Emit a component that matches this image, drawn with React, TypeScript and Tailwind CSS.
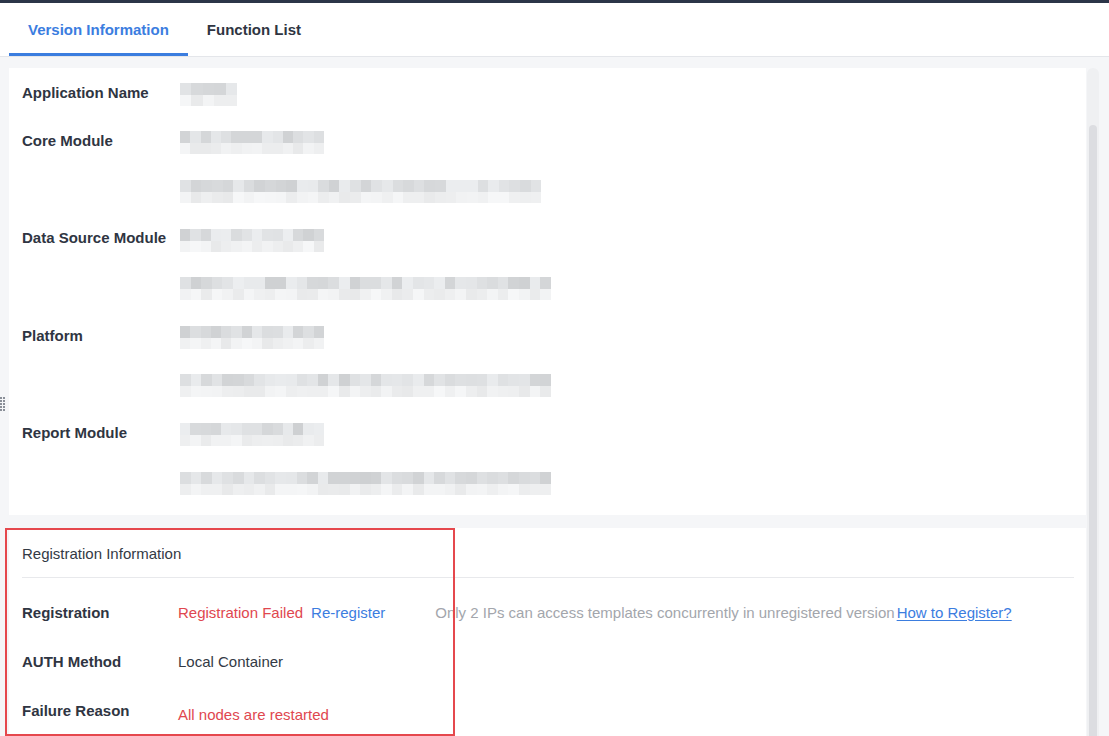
import React from "react";

function rand(seed: number) {
  let s = seed;
  return () => {
    s = (s * 9301 + 49297) % 233280;
    return s / 233280;
  };
}

const Mosaic = ({ width, seed }: { width: number; seed: number }) => {
  const r = rand(seed);
  const n = Math.max(1, Math.round(width / 10.5));
  const top: string[] = [];
  const bot: string[] = [];
  for (let i = 0; i < n; i++) {
    const a = Math.round(206 + r() * 30);
    const b = Math.round(232 + r() * 14);
    top.push(`rgb(${a},${a + 2},${a + 4})`);
    bot.push(`rgb(${b},${b + 1},${b + 2})`);
  }
  return (
    <div className="flex flex-col mt-[4px]" style={{ width }}>
      <div className="flex h-[12px]">
        {top.map((c, i) => (
          <div key={i} className="flex-1" style={{ background: c }} />
        ))}
      </div>
      <div className="flex h-[11px]">
        {bot.map((c, i) => (
          <div key={i} className="flex-1" style={{ background: c }} />
        ))}
      </div>
    </div>
  );
};

const rows: { label: string; w: number }[] = [
  { label: "Application Name", w: 57 },
  { label: "Core Module", w: 144 },
  { label: "", w: 361 },
  { label: "Data Source Module", w: 144 },
  { label: "", w: 371 },
  { label: "Platform", w: 144 },
  { label: "", w: 371 },
  { label: "Report Module", w: 144 },
  { label: "", w: 371 },
];

export default function App() {
  return (
    <div className="relative w-[1109px] h-[736px] overflow-hidden bg-[#f5f6f8] font-['Liberation_Sans',Arial,sans-serif] text-[15px]">
      <div className="h-[3px] bg-[#2b3548]" />
      <div className="h-[54px] bg-white border-b border-[#e4e6ea] flex pl-[9px]">
        <div className="h-[53px] px-[19px] flex items-center font-bold text-[#3b7ddf] border-b-[3px] border-[#3b7ddf] pt-[5px]">
          Version Information
        </div>
        <div className="h-[53px] px-[19px] flex items-center font-bold text-[#2f3542] pt-[1px]">
          Function List
        </div>
      </div>
      <div className="flex">
        <div className="ml-[9px] w-[1077px] flex flex-col">
          <div className="mt-[11px] h-[447px] bg-white flex flex-col">
            {rows.map((row, i) => (
              <div key={i} className="h-[48.6px] flex items-center">
                <div className="w-[171px] pl-[13px] font-bold text-[#2f3542] pt-[1px]">{row.label}</div>
                <Mosaic width={row.w} seed={i * 37 + 11} />
              </div>
            ))}
          </div>
          <div className="mt-[13px] h-[220px] bg-white px-[13px] pr-[12px]">
            <div className="h-[50px] flex items-center border-b border-[#e8e9ec] text-[#333a45] pt-[3px]">
              Registration Information
            </div>
            <div className="pt-[11px] flex flex-col">
              <div className="h-[49px] flex items-center">
                <div className="w-[156px] font-bold text-[#2f3542]">Registration</div>
                <span className="text-[#e0474f]">Registration Failed</span>
                <span className="ml-[8px] text-[#3b7ddf]">Re-register</span>
                <span className="ml-[50px] text-[#a3a6ac]">
                  Only 2 IPs can access templates concurrently in unregistered version
                </span>
                <span className="ml-[2px] text-[#3b7ddf] underline underline-offset-2">How to Register?</span>
              </div>
              <div className="h-[49px] flex items-center">
                <div className="w-[156px] font-bold text-[#2f3542]">AUTH Method</div>
                <span className="text-[#333a45]">Local Container</span>
              </div>
              <div className="h-[49px] flex items-center">
                <div className="w-[156px] font-bold text-[#2f3542]">Failure Reason</div>
                <span className="pt-[8px] text-[#e0474f]">All nodes are restarted</span>
              </div>
            </div>
          </div>
        </div>
        <div className="ml-[1px] w-[12px] mt-[11px] h-[700px] rounded-t-[6px] bg-[#eff0f2] flex flex-col px-[2px]">
          <div className="mt-[57px] flex-1 bg-[#dcdde1] rounded-t-[4px]" />
        </div>
      </div>
      <div className="absolute left-[0px] top-[397px] grid grid-cols-2 gap-[1px]">
        {Array.from({ length: 10 }).map((_, i) => (
          <div key={i} className="w-[2px] h-[2px] bg-[#8a8f98]" />
        ))}
      </div>
      <div className="absolute left-[5px] top-[528px] w-[450px] h-[208px] border-2 border-[#e5484d]" />
    </div>
  );
}
